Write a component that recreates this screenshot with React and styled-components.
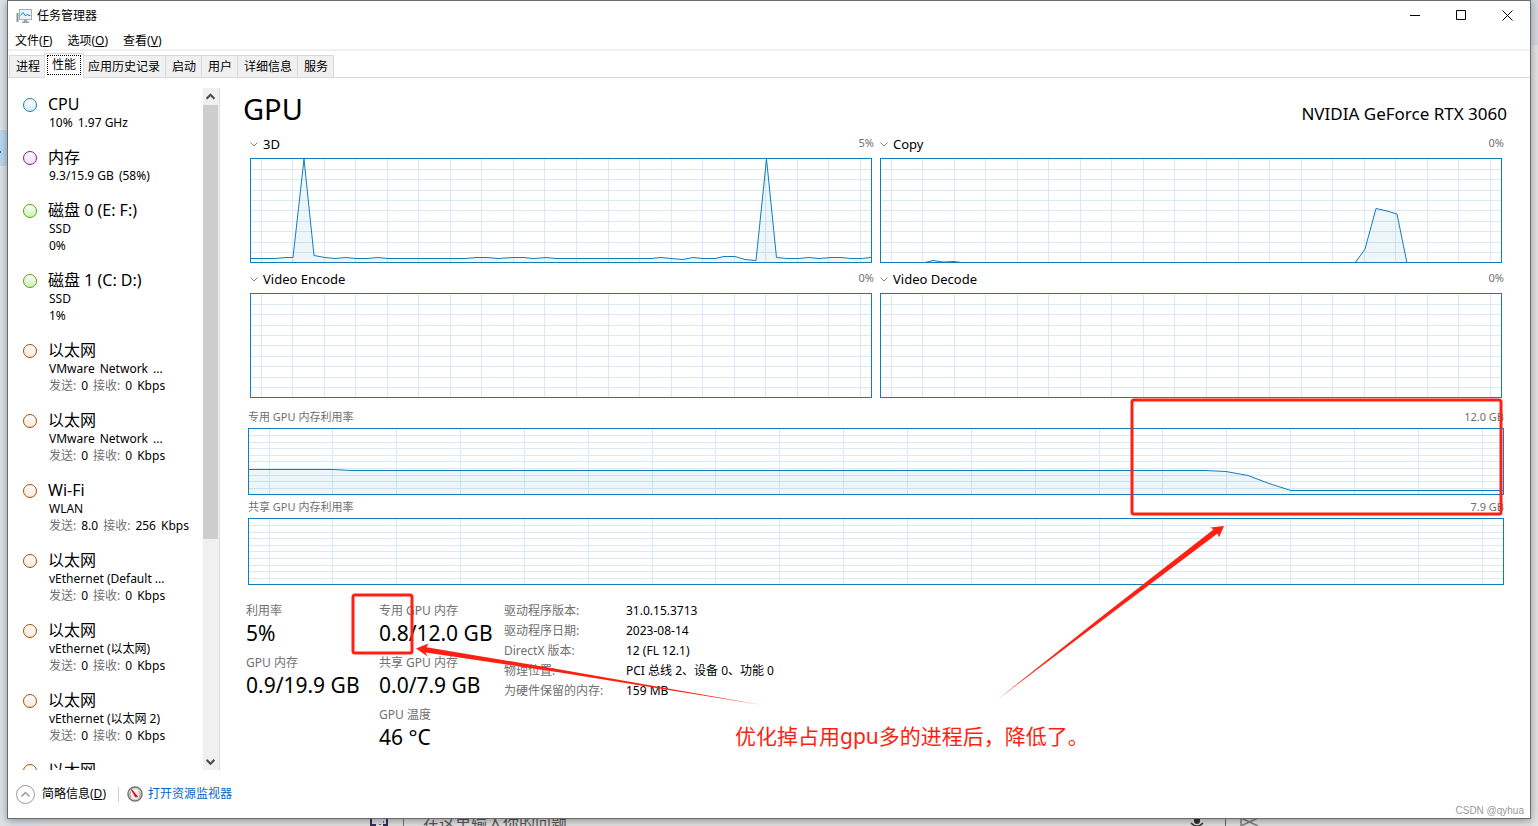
import React from "react";
import styled, { createGlobalStyle } from "styled-components";

const GlobalStyle = createGlobalStyle`
  * {
    box-sizing: border-box;
  }

  body {
    margin: 0;
    color: #000;
    font-family: "Noto Sans", "Noto Sans CJK SC", sans-serif;
    font-size: 12px;
    line-height: 18px;
  }

  button {
    padding: 0;
    border: 0;
    background: none;
    color: inherit;
    font: inherit;
  }
`;

const Desktop = styled.div`
  position: relative;
  display: flex;
  height: 100vh;
  padding: 0 7px;
  padding-bottom: 7px;
  overflow: hidden;
  background: linear-gradient(90deg, #dde2e9 45px, #e3e2e3 45px);
`;

const ExplorerSelection = styled.div`
  position: absolute;
  top: 130px;
  left: 0;
  width: 7px;
  height: 36px;
  background: #b9d8ed;

  &::before {
    position: absolute;
    top: 21px;
    left: 0;
    width: 1px;
    height: 2px;
    background: #1479c4;
    content: "";
  }
`;

const BackTitlebar = styled.div`
  position: absolute;
  top: 0;
  right: 0;
  width: 8px;
  height: 45px;
  background: #d3d8e0;
`;

const ChatBar = styled.div`
  position: absolute;
  right: 0;
  bottom: 0;
  left: 0;
  display: flex;
  align-items: flex-end;
  height: 20px;
  padding-left: 369px;
  padding-right: 276px;
  color: #555;
  font-size: 16px;

  svg {
    display: block;
  }
`;

const ChatPrompt = styled.span`
  height: 14px;
  margin-left: 19px;
  line-height: 22px;
`;

const ChatTools = styled.div`
  margin-left: auto;
`;

const Window = styled.div`
  position: relative;
  display: flex;
  flex: 1;
  flex-direction: column;
  min-width: 0;
  border: 1px solid #6b6b6b;
  background: #fff;
  box-shadow: 0 2px 8px rgba(0, 0, 0, 0.35);
`;

const TitleBar = styled.header`
  display: flex;
  align-items: center;
  height: 30px;
  padding-left: 8px;
`;

const WindowTitle = styled.h1`
  flex: 1;
  margin: 0 0 0 5px;
  font-size: 12px;
  font-weight: 400;
`;

const CaptionButton = styled.button`
  display: flex;
  align-items: center;
  justify-content: center;
  width: 46px;
  height: 30px;
  padding-bottom: 2px;
`;

const MenuBar = styled.nav`
  display: flex;
  align-items: flex-end;
  gap: 15px;
  height: 20px;
  padding-left: 7px;
  border-bottom: 2px solid #f0f0f0;

  button {
    height: 17px;
  }
`;

const TabStrip = styled.div`
  display: flex;
  align-items: flex-end;
  height: 27px;
  padding-left: 1px;
  border-bottom: 1px solid #d9d9d9;
`;

const Tab = styled.button`
  height: 22px;
  padding: 0 5px 0 6px;
  border: 1px solid #d9d9d9;
  border-width: 1px 1px 0 0;
  background: #f0f0f0;

  &:first-child {
    border-left-width: 1px;
  }

  &[aria-selected="true"] {
    position: relative;
    height: 25px;
    margin: 0 -2px -1px;
    padding: 0 2px 2px;
    border-left-width: 1px;
    background: #fff;
  }

  &[aria-selected="true"] span {
    display: block;
    height: 20px;
    padding: 0 4px;
    border: 1px dotted #000;
    line-height: 17px;
  }
`;

const Body = styled.div`
  display: flex;
  flex: 1;
  min-height: 0;
  padding-top: 10px;
`;

const Sidebar = styled.aside`
  display: flex;
  width: 212px;
  min-height: 0;
  border-right: 1px solid #dcdcdc;
`;

const DeviceList = styled.ul`
  display: flex;
  flex: 1;
  flex-direction: column;
  gap: 16px;
  min-width: 0;
  margin: 0;
  padding: 6px 0 0 15px;
  overflow: hidden;
  list-style: none;
`;

const Device = styled.li`
  display: flex;
  flex-shrink: 0;
  gap: 11px;
`;

const Dot = styled.span`
  width: 14px;
  height: 14px;
  margin-top: 4px;
  border: 1px solid ${(props) => props.$line};
  border-radius: 50%;
  background: linear-gradient(#fff, ${(props) => props.$fill});
`;

const DeviceName = styled.div`
  font-size: 16px;
  line-height: 20px;
`;

const DeviceInfo = styled.div`
  display: flex;
  gap: 5px;
  padding-left: 1px;
  line-height: 17px;
  white-space: nowrap;
`;

const Muted = styled.span`
  color: #707070;
`;

const ScrollBar = styled.div`
  display: flex;
  flex-direction: column;
  width: 16px;
  background: #f0f0f0;
`;

const ScrollButton = styled.button`
  display: flex;
  align-items: center;
  justify-content: center;
  width: 15px;
  height: 17px;
`;

const ScrollTrack = styled.div`
  flex: 1;
`;

const ScrollThumb = styled.div`
  width: 15px;
  height: 67%;
  background: #cdcdcd;
`;

const Main = styled.main`
  flex: 1;
  min-width: 0;
  padding: 0 26px 0 28px;
`;

const MainHeader = styled.div`
  display: flex;
  align-items: baseline;
  justify-content: space-between;
  height: 40px;
  margin: 0 -3px 0 -5px;
`;

const Resource = styled.h2`
  margin: 0;
  font-size: 29px;
  font-weight: 400;
  line-height: 42px;
`;

const Adapter = styled.span`
  font-size: 17px;
`;

const EngineGrid = styled.div`
  display: grid;
  grid-template-columns: 1fr 1fr;
  column-gap: 8px;
  padding: 0 2px;
`;

const EngineHead = styled.div`
  display: flex;
  align-items: center;
  justify-content: space-between;
  height: 30px;
  margin-right: -2px;
`;

const EnginePicker = styled.button`
  display: flex;
  align-items: center;
  gap: 5px;
  padding-top: 2px;
  font-size: 13px;
`;

const Scale = styled.span`
  color: #707070;
  font-size: 11px;
`;

const MemoryHead = styled.div`
  display: flex;
  align-items: center;
  justify-content: space-between;
  height: 23px;
  color: #707070;
  font-size: 11px;
`;

const MemoryArea = styled.div`
  padding-top: 7px;
`;

const Plot = styled.div`
  height: ${(props) => props.$height}px;
  border: 1px solid #117dbb;

  svg {
    display: block;
    width: 100%;
    height: 100%;
  }
`;

const Stats = styled.div`
  display: grid;
  grid-template-columns: 133px 125px auto;
  margin-left: -2px;
  padding-top: 16px;
`;

const StatColumn = styled.div`
  display: flex;
  flex-direction: column;
  gap: 8px;
`;

const StatLabel = styled.div`
  color: #707070;
  line-height: 20px;
`;

const StatValue = styled.div`
  font-size: 21px;
  line-height: 24px;
  white-space: nowrap;
`;

const Details = styled.dl`
  display: grid;
  grid-template-columns: 122px auto;
  align-content: start;
  justify-content: start;
  margin: 0;
  line-height: 20px;

  dt {
    color: #707070;
  }

  dd {
    margin: 0;
  }
`;

const Footer = styled.footer`
  display: flex;
  align-items: center;
  height: 48px;
  padding: 0 8px;
`;

const FewerDetails = styled.button`
  display: flex;
  align-items: center;
  gap: 7px;
`;

const Divider = styled.span`
  width: 1px;
  height: 15px;
  margin: 0 8px 0 12px;
  background: #d0d0d0;
`;

const MonitorLink = styled.a`
  display: flex;
  align-items: center;
  gap: 5px;
  color: #0066cc;
  text-decoration: none;
`;

const Markup = styled.svg`
  position: absolute;
  top: 0;
  left: 0;
  overflow: visible;
  pointer-events: none;
`;

const Note = styled.div`
  position: absolute;
  top: 721px;
  left: 735px;
  color: #ff1f10;
  font-size: 21px;
  line-height: 30px;
  white-space: nowrap;
`;

const Watermark = styled.span`
  position: absolute;
  right: 6px;
  bottom: 0;
  color: #999;
  font-family: "Liberation Sans", sans-serif;
  font-size: 10px;
  line-height: 14px;
`;

const menus = [
  ["文件", "F"],
  ["选项", "O"],
  ["查看", "V"],
];

const tabs = ["进程", "性能", "应用历史记录", "启动", "用户", "详细信息", "服务"];

const colors = {
  cpu: ["#117dbb", "#d9eaf6"],
  memory: ["#8b12ae", "#f1ddf7"],
  disk: ["#4da60c", "#cdf0b4"],
  network: ["#a74f01", "#fce8d8"],
};

const devices = [
  { kind: "cpu", name: "CPU", info: [["10%", "1.97 GHz"]] },
  { kind: "memory", name: "内存", info: [["9.3/15.9 GB", "(58%)"]] },
  { kind: "disk", name: "磁盘 0 (E: F:)", info: [["SSD"], ["0%"]] },
  { kind: "disk", name: "磁盘 1 (C: D:)", info: [["SSD"], ["1%"]] },
  { kind: "network", name: "以太网", info: [["VMware", "Network", "..."]], net: ["0", "0", "Kbps"] },
  { kind: "network", name: "以太网", info: [["VMware", "Network", "..."]], net: ["0", "0", "Kbps"] },
  { kind: "network", name: "Wi-Fi", info: [["WLAN"]], net: ["8.0", "256", "Kbps"] },
  { kind: "network", name: "以太网", info: [["vEthernet (Default ..."]], net: ["0", "0", "Kbps"] },
  { kind: "network", name: "以太网", info: [["vEthernet (以太网)"]], net: ["0", "0", "Kbps"] },
  { kind: "network", name: "以太网", info: [["vEthernet (以太网 2)"]], net: ["0", "0", "Kbps"] },
  { kind: "network", name: "以太网", info: [] },
];

const engineRows = [10, 20, 31, 41, 51, 62, 72, 83, 93];
const engineColumns = Array.from({ length: 20 }, (_, i) => 10 + Math.floor(i * 31.55));
const memoryRows = [6, 13, 19, 26, 32, 39, 46, 52, 59];
const memoryColumns = Array.from({ length: 20 }, (_, i) => 20 + Math.floor(i * 63.85));

const load3d =
  "0,99.5 24,99.5 35,98.5 42,98.5 53,0 63,96.5 74,98.5 84,99.5 95,98.5 105,99.5 116,99.5 127,98.5 137,99.5 214,99.5 226,98.5 236,98.5 247,99.5 262,98.5 272,98.5 283,99.5 295,98.5 305,99.5 400,99.5 410,98.5 420,99.5 432,100.5 442,98.5 452,99.5 464,99.5 473,97.5 484,97.5 494,100.5 505,101.5 515.5,0 525.5,98.5 536,99.5 547,99.5 558,98.5 568,99.5 580,98.5 590,98.5 600,99.5 610,99.5 620,98.5";
const loadCopy =
  "0,104 42,104 52,101.5 62,103 73,102.5 84,104 474,104 484,90 495,49.5 506,52 516,55 526,104 620,104";
const loadDedicated =
  "0,40.5 84,40.5 102,41.5 956,41.5 977,42.5 999,46.5 1020,54.5 1042,61.5 1254,61.5";

const engines = [
  { name: "3D", value: "5%", points: load3d },
  { name: "Copy", value: "0%", points: loadCopy },
  { name: "Video Encode", value: "0%" },
  { name: "Video Decode", value: "0%" },
];

const memories = [
  { name: "专用 GPU 内存利用率", limit: "12.0 GB", points: loadDedicated },
  { name: "共享 GPU 内存利用率", limit: "7.9 GB" },
];

const stats = [
  [
    ["利用率", "5%"],
    ["GPU 内存", "0.9/19.9 GB"],
  ],
  [
    ["专用 GPU 内存", "0.8/12.0 GB"],
    ["共享 GPU 内存", "0.0/7.9 GB"],
    ["GPU 温度", "46 °C"],
  ],
];

const details = [
  ["驱动程序版本:", "31.0.15.3713"],
  ["驱动程序日期:", "2023-08-14"],
  ["DirectX 版本:", "12 (FL 12.1)"],
  ["物理位置:", "PCI 总线 2、设备 0、功能 0"],
  ["为硬件保留的内存:", "159 MB"],
];

function Chart({ width, height, columns, rows, points }) {
  const grid =
    columns.map((x) => `M${x + 0.5} 0V${height}`).join("") +
    rows.map((y) => `M0 ${y + 0.5}H${width}`).join("");

  return (
    <Plot $height={height + 2}>
      <svg viewBox={`0 0 ${width} ${height}`} preserveAspectRatio="none" aria-hidden="true">
        <path d={grid} stroke="#d9eaf4" fill="none" vectorEffect="non-scaling-stroke" />
        {points && (
          <>
            <polygon
              points={`0,${height} ${points} ${width},${height}`}
              fill="#117dbb"
              fillOpacity="0.07"
            />
            <polyline
              points={points}
              stroke="#117dbb"
              fill="none"
              vectorEffect="non-scaling-stroke"
            />
          </>
        )}
      </svg>
    </Plot>
  );
}

function Chevron({ up, size = 7, color = "#808080", weight = 1 }) {
  return (
    <svg width={size} height={size} viewBox="0 0 8 8" aria-hidden="true">
      <path
        d={up ? "M0.5 6L4 2.5L7.5 6" : "M0.5 2.5L4 6L7.5 2.5"}
        stroke={color}
        strokeWidth={weight}
        fill="none"
      />
    </svg>
  );
}

function AppIcon() {
  return (
    <svg width="16" height="16" viewBox="0 0 16 16" aria-hidden="true">
      <rect x="0.5" y="5" width="2" height="9" fill="#8c9499" />
      <rect x="1" y="6" width="1" height="2" fill="#59c23d" />
      <rect x="3.5" y="1.5" width="12" height="10" fill="#e9f5fc" stroke="#a9adb0" />
      <path d="M4.5 7.5L7 4.5L9.5 8L11.5 6L12.5 7.5H14.5" stroke="#1687c7" fill="none" />
      <path d="M8 12h3v1.5h2V15H6v-1.5h2z" fill="#9aa0a4" />
    </svg>
  );
}

function GaugeIcon() {
  return (
    <svg width="16" height="16" viewBox="0 0 16 16" aria-hidden="true">
      <circle cx="8" cy="8" r="7" fill="#f5f3ef" stroke="#77736f" strokeWidth="1.5" />
      <circle cx="8" cy="8" r="5.5" fill="none" stroke="#cfcac4" />
      <path d="M4 11.5a5 5 0 0 1 0-6M12 11.5a5 5 0 0 0 0-6" stroke="#a39d97" fill="none" />
      <path d="M4.5 3.5L10.5 10.5L8.5 11Z" fill="#d11111" stroke="#d11111" />
    </svg>
  );
}

function Behind() {
  return (
    <>
      <ExplorerSelection />
      <BackTitlebar />
      <ChatBar>
        <svg width="35" height="20" aria-hidden="true">
          <path d="M2 8V19H7M18 8V19H14" stroke="#35305e" strokeWidth="2" fill="none" />
          <path d="M10 18.5h2M14.5 15v2" stroke="#6a6880" />
          <path d="M34.5 8V20" stroke="#777" />
        </svg>
        <ChatPrompt>在这里输入你的问题</ChatPrompt>
        <ChatTools>
          <svg width="72" height="20" aria-hidden="true">
            <rect x="4" y="6" width="6" height="12" rx="3" fill="#333" />
            <path d="M1 17q6 6 12 0" stroke="#333" strokeWidth="1.5" fill="none" />
            <path d="M35.5 8V20" stroke="#666" />
            <path d="M51 22V12L68 20M51 20L68 12" stroke="#808080" strokeWidth="1.5" fill="none" />
          </svg>
        </ChatTools>
      </ChatBar>
    </>
  );
}

function DeviceItem({ kind, name, info, net }) {
  const [line, fill] = colors[kind];

  return (
    <Device>
      <Dot $line={line} $fill={fill} />
      <div>
        <DeviceName>{name}</DeviceName>
        {info.map((words) => (
          <DeviceInfo key={words[0]}>
            {words.map((word) => (
              <span key={word}>{word}</span>
            ))}
          </DeviceInfo>
        ))}
        {net && (
          <DeviceInfo>
            <Muted>发送:</Muted>
            <span>{net[0]}</span>
            <Muted>接收:</Muted>
            <span>{net[1]}</span>
            <span>{net[2]}</span>
          </DeviceInfo>
        )}
      </div>
    </Device>
  );
}

function Annotations() {
  return (
    <>
      <Markup width="1" height="1" aria-hidden="true">
        <g fill="none" stroke="#ff2012" strokeWidth="3">
          <rect x="1132" y="400" width="369" height="114" rx="2" />
          <rect x="353" y="595" width="59" height="58" rx="2" />
        </g>
        <g fill="#ff2012">
          <path d="M416 648.5L428.5 643.5L426.5 647.2L560 669.5L762 705L560 672.5L425.5 652.5L427.5 656.5Z" />
          <path d="M1224 526L1219 537.5L1217.5 533.5L1100 622L997 700L1098 619.5L1213.5 529.5L1210.5 527.5Z" />
        </g>
      </Markup>
      <Note>优化掉占用gpu多的进程后，降低了。</Note>
    </>
  );
}

function App() {
  return (
    <Desktop lang="zh-CN">
      <GlobalStyle />
      <Behind />
      <Window>
        <TitleBar>
          <AppIcon />
          <WindowTitle>任务管理器</WindowTitle>
          <CaptionButton aria-label="最小化">
            <svg width="11" height="11">
              <path d="M0 5.5H10" stroke="#000" />
            </svg>
          </CaptionButton>
          <CaptionButton aria-label="最大化">
            <svg width="11" height="11">
              <path d="M0.5 0.5H9.5V9.5H0.5Z" stroke="#000" fill="none" />
            </svg>
          </CaptionButton>
          <CaptionButton aria-label="关闭">
            <svg width="11" height="11">
              <path d="M0.5 0.5L10.5 10.5M10.5 0.5L0.5 10.5" stroke="#000" />
            </svg>
          </CaptionButton>
        </TitleBar>
        <MenuBar>
          {menus.map(([label, key]) => (
            <button key={key}>
              {label}(<u>{key}</u>)
            </button>
          ))}
        </MenuBar>
        <TabStrip role="tablist">
          {tabs.map((tab) => (
            <Tab key={tab} role="tab" aria-selected={tab === "性能"}>
              <span>{tab}</span>
            </Tab>
          ))}
        </TabStrip>
        <Body>
          <Sidebar>
            <DeviceList>
              {devices.map((device, index) => (
                <DeviceItem key={index} {...device} />
              ))}
            </DeviceList>
            <ScrollBar>
              <ScrollButton aria-label="向上滚动">
                <Chevron up size={9} color="#505050" weight={2} />
              </ScrollButton>
              <ScrollTrack>
                <ScrollThumb />
              </ScrollTrack>
              <ScrollButton aria-label="向下滚动">
                <Chevron size={9} color="#505050" weight={2} />
              </ScrollButton>
            </ScrollBar>
          </Sidebar>
          <Main>
            <MainHeader>
              <Resource>GPU</Resource>
              <Adapter>NVIDIA GeForce RTX 3060</Adapter>
            </MainHeader>
            <EngineGrid>
              {engines.map(({ name, value, points }) => (
                <section key={name}>
                  <EngineHead>
                    <EnginePicker>
                      <Chevron size={8} />
                      {name}
                    </EnginePicker>
                    <Scale>{value}</Scale>
                  </EngineHead>
                  <Chart
                    width={620}
                    height={103}
                    columns={engineColumns}
                    rows={engineRows}
                    points={points}
                  />
                </section>
              ))}
            </EngineGrid>
            <MemoryArea>
              {memories.map(({ name, limit, points }) => (
                <section key={name}>
                  <MemoryHead>
                    <span>{name}</span>
                    <span>{limit}</span>
                  </MemoryHead>
                  <Chart
                    width={1254}
                    height={65}
                    columns={memoryColumns}
                    rows={memoryRows}
                    points={points}
                  />
                </section>
              ))}
            </MemoryArea>
            <Stats>
              {stats.map((column, index) => (
                <StatColumn key={index}>
                  {column.map(([label, value]) => (
                    <div key={label}>
                      <StatLabel>{label}</StatLabel>
                      <StatValue>{value}</StatValue>
                    </div>
                  ))}
                </StatColumn>
              ))}
              <Details>
                {details.map(([label, value]) => (
                  <React.Fragment key={label}>
                    <dt>{label}</dt>
                    <dd>{value}</dd>
                  </React.Fragment>
                ))}
              </Details>
            </Stats>
          </Main>
        </Body>
        <Footer>
          <FewerDetails>
            <svg width="19" height="19" aria-hidden="true">
              <circle cx="9.5" cy="9.5" r="9" fill="#fff" stroke="#999" />
              <path d="M5.5 11.5L9.5 7.5L13.5 11.5" stroke="#999" strokeWidth="1.5" fill="none" />
            </svg>
            <span>
              简略信息(<u>D</u>)
            </span>
          </FewerDetails>
          <Divider />
          <MonitorLink href="#resmon">
            <GaugeIcon />
            打开资源监视器
          </MonitorLink>
        </Footer>
        <Watermark>CSDN @qyhua</Watermark>
      </Window>
      <Annotations />
    </Desktop>
  );
}

export default App;
